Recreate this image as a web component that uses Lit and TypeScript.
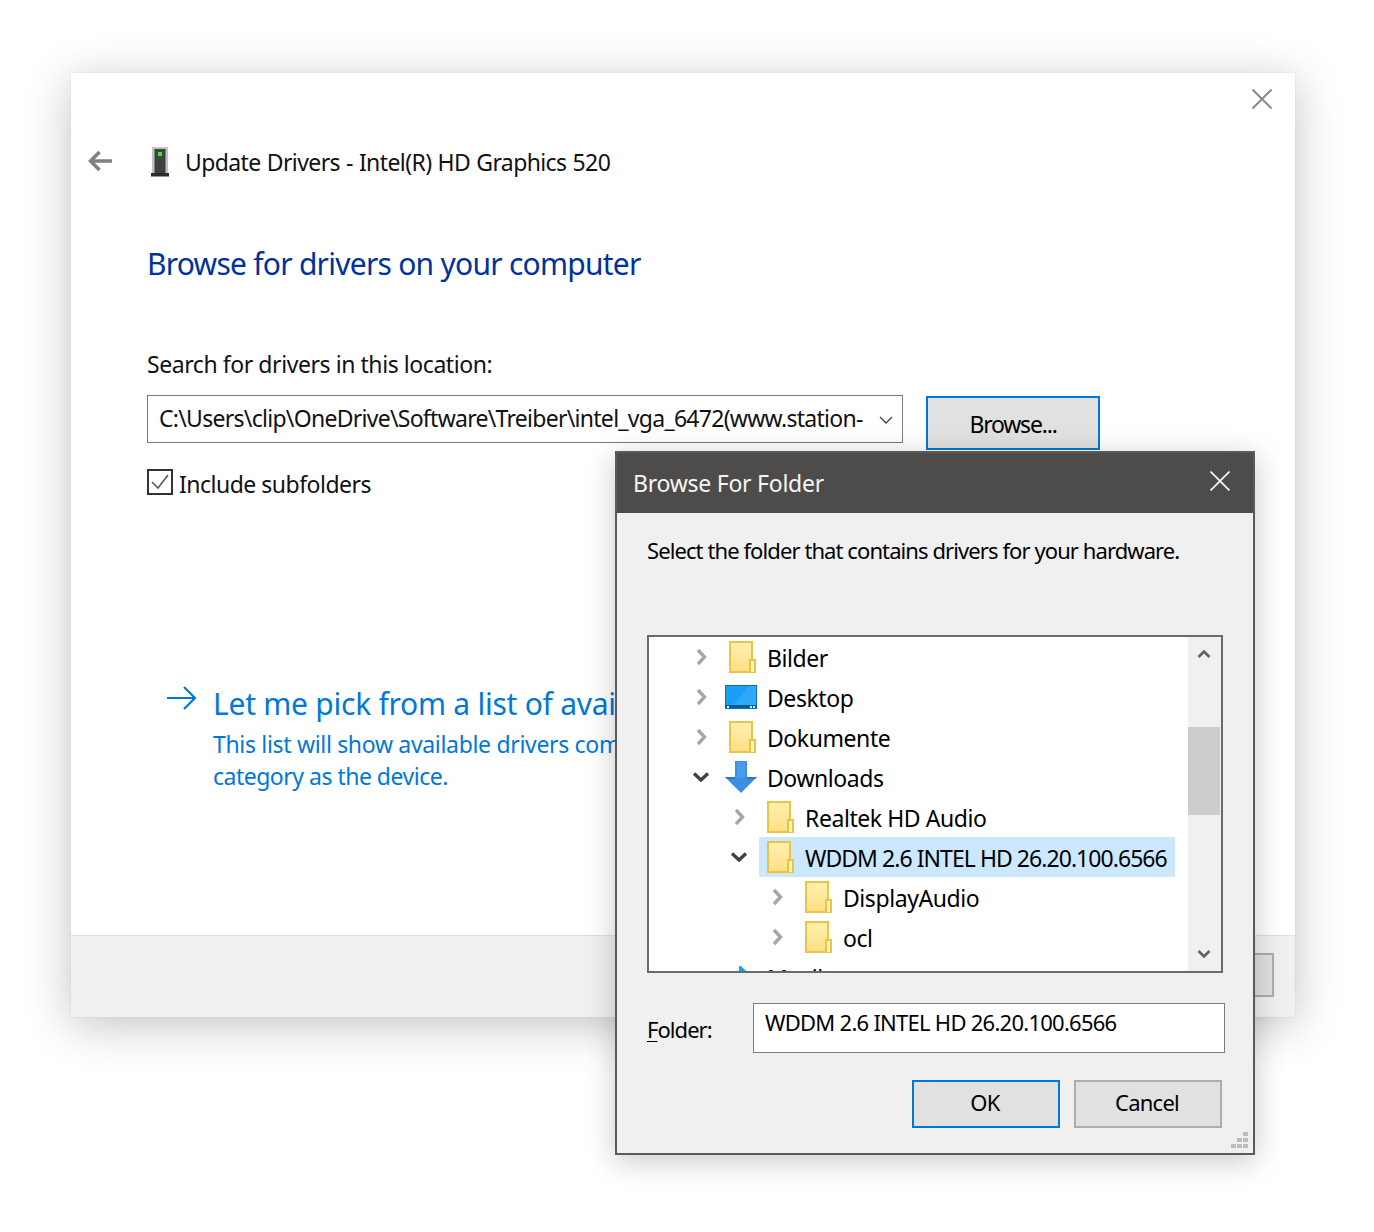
import { LitElement, html, css } from "lit";
import { customElement } from "lit/decorators.js";

type Kind = "folder" | "desktop" | "download" | "music";
interface Row { depth: number; open?: boolean; icon: Kind; label: string; selected?: boolean; noChev?: boolean }

const ROWS: Row[] = [
  { depth: 0, icon: "folder", label: "Bilder" },
  { depth: 0, icon: "desktop", label: "Desktop" },
  { depth: 0, icon: "folder", label: "Dokumente" },
  { depth: 0, open: true, icon: "download", label: "Downloads" },
  { depth: 1, icon: "folder", label: "Realtek HD Audio" },
  { depth: 1, open: true, icon: "folder", label: "WDDM 2.6 INTEL HD 26.20.100.6566", selected: true },
  { depth: 2, icon: "folder", label: "DisplayAudio" },
  { depth: 2, icon: "folder", label: "ocl" },
  { depth: 0, icon: "music", label: "Musik", noChev: true },
];

const icon = (k: Kind) => {
  if (k === "folder")
    return html`<svg width="32" height="32" viewBox="0 0 32 32">
      <defs><linearGradient id="fg" x1="0" y1="0" x2="0" y2="1"><stop offset="0" stop-color="#fff0b0"/><stop offset="1" stop-color="#fddf85"/></linearGradient></defs>
      <rect x="5" y="1" width="22" height="30" fill="url(#fg)" stroke="#ebc443" stroke-width="2"/>
      <rect x="25" y="19" width="5" height="13" fill="#fff3c4" stroke="#ebc443" stroke-width="2"/>
    </svg>`;
  if (k === "desktop")
    return html`<svg width="32" height="32" viewBox="0 0 32 32">
      <rect x="0" y="4" width="32" height="24" fill="#0b6fb4"/>
      <rect x="1" y="5" width="30" height="19" fill="#1a9df5"/>
      <path d="M8 24 L24 5 H31 V24Z" fill="#2fa9f7"/>
      <rect x="1" y="24" width="30" height="3" fill="#0a5a99"/>
      <rect x="2" y="25" width="2" height="2" fill="#dff"/><rect x="25" y="25" width="2" height="2" fill="#dff"/><rect x="28" y="25" width="2" height="2" fill="#dff"/>
    </svg>`;
  if (k === "download")
    return html`<svg width="32" height="32" viewBox="0 0 32 32">
      <path d="M10 0 H22 V16 H32 L16 32 L0 16 H10Z" fill="#3b8fe2"/>
      <path d="M12 1 H20 V17 H12Z" fill="#4a9ce8"/>
      <path d="M0 16 H10 V18 H2Z M32 16 H22 V18 H30Z" fill="#2b78c8"/>
    </svg>`;
  return html`<svg width="32" height="32" viewBox="0 0 32 32">
      <path d="M14 5 L16 5 L25 14 V32 H14Z" fill="#1a9df5"/>
    </svg>`;
};

const chev = (open?: boolean) =>
  open
    ? html`<svg width="18" height="12" viewBox="0 0 18 12"><path d="M2 2.5 L9 9 L16 2.5" fill="none" stroke="#404040" stroke-width="3.4"/></svg>`
    : html`<svg width="12" height="18" viewBox="0 0 12 18"><path d="M3 2 L9.5 9 L3 16" fill="none" stroke="#a6a6a6" stroke-width="3.4"/></svg>`;

@customElement("app-root")
export class AppRoot extends LitElement {
  static styles = css`
    :host { display: block; position: relative; width: 1374px; height: 1232px; background: #fff; overflow: hidden;
      font-family: "Noto Sans", "Open Sans", sans-serif; color: #000; font-size: 23px; letter-spacing: -0.55px; }
    * { box-sizing: border-box; }
    .canvas { padding: 73px 0 0 71px; }
    .window { width: 1224px; height: 944px; background: #fff; display: flex; flex-direction: column;
      box-shadow: 0 0 0 1px rgba(0,0,0,.025), 0 8px 44px rgba(0,0,0,.24); }
    .main { flex: 1; display: flex; flex-direction: column; min-height: 0; }
    .topbar { height: 52px; display: flex; justify-content: flex-end; padding: 16px 23px 0 0; }
    .head { display: flex; align-items: center; height: 36px; margin-top: 19px; padding-left: 17px; }
    .head .back { position: relative; top: -1px; }
    .head .device { margin-left: 37px; margin-right: 14px; display: flex; }
    .head .title { white-space: nowrap; color: #111; letter-spacing: -0.6px; word-spacing: 0.7px; }
    .h1 { margin: 0; padding: 62px 0 0 76px; font-weight: 400; font-size: 30px; line-height: 44px; color: #003399; letter-spacing: -0.75px; }
    .loc { padding: 60px 0 0 76px; line-height: 36px; color: #111; letter-spacing: -0.43px; }
    .locrow { display: flex; padding: 13px 0 0 76px; height: 77px; align-items: flex-start; }
    .combo { width: 756px; height: 48px; border: 1px solid #7a7a7a; display: flex; align-items: center; padding: 0 9px 0 11px; justify-content: space-between; white-space: nowrap; overflow: hidden; }
    .combo span { color: #111; overflow: hidden; width: 712px; letter-spacing: -0.72px; padding-bottom: 2px; }
    .combo svg { margin-top: 2px; }
    .browse { margin: 1px 0 0 23px; width: 174px; height: 54px; border: 2px solid #0078d7; background: #e1e1e1; display: flex; align-items: center; justify-content: center; letter-spacing: -1.2px; padding-top: 1px; }
    .check { display: flex; align-items: center; gap: 6px; padding: 6px 0 0 76px; color: #111; height: 44px; letter-spacing: -0.5px; }
    .box { width: 26px; height: 26px; border: 2px solid #333; display: flex; align-items: center; justify-content: center; margin-bottom: 4px; }
    .link { display: flex; padding: 181px 0 0 96px; color: #0078d7; white-space: nowrap; }
    .link .arrow { width: 46px; padding-top: 2px; display: flex; flex: none; }
    .link h2 { margin: 0; font-weight: 400; font-size: 30px; line-height: 40px; letter-spacing: -0.25px; }
    .link p { margin: 4px 0 0; line-height: 32px; }
    .link .wide { letter-spacing: -0.32px; }
    .link .narrow { letter-spacing: -0.5px; }
    .footer { height: 82px; background: #f0f0f0; border-top: 1px solid #dfdfdf; display: flex; justify-content: flex-end; padding: 17px 21px 0 0; }
    .fbtn { width: 148px; height: 44px; background: #e1e1e1; border: 2px solid #adadad; }

    .dialog { position: absolute; left: 615px; top: 451px; width: 640px; height: 704px; background: #f0f0f0;
      border: 2px solid #5a5a5a; box-shadow: 0 6px 28px rgba(0,0,0,.22); display: flex; flex-direction: column; }
    .dtitle { height: 60px; margin: 0; background: #4d4c4a; color: #f5f5f5; display: flex; align-items: center; justify-content: space-between; padding: 0 23px 0 16px; flex: none; letter-spacing: -0.25px; }
    .dtitle svg { margin-bottom: 4px; }
    .prompt { padding: 19px 0 0 30px; line-height: 36px; height: 122px; flex: none; font-size: 22px; letter-spacing: -0.91px; white-space: nowrap; }
    .treebox { margin-left: 30px; width: 576px; height: 338px; border: 2px solid #6b6b6b; background: #fff; display: flex; flex: none; overflow: hidden; }
    .tree { width: 539px; flex: none; overflow: hidden; }
    .row { height: 40px; display: flex; align-items: center; white-space: nowrap; letter-spacing: -0.43px; }
    .chev { width: 32px; flex: none; display: flex; justify-content: center; align-items: center; }
    .item { height: 40px; display: flex; align-items: center; gap: 10px; padding: 0 8px 0 4px; margin-left: 4px; flex: none; }
    .item span { padding-top: 2px; }
    .item.sel { background: #cce8ff; letter-spacing: -0.95px; }
    .item svg { display: block; flex: none; }
    .sb { width: 33px; flex: none; background: #f0f0f0; display: flex; flex-direction: column; padding-right: 1px; }
    .sbtn { height: 34px; display: flex; align-items: center; justify-content: center; flex: none; }
    .thumb { height: 88px; margin-top: 56px; background: #cdcdcd; flex: none; }
    .sbtn.down { margin-top: auto; }
    .folder { display: flex; padding: 30px 0 0 30px; align-items: flex-start; height: 80px; flex: none; }
    .folder label { width: 106px; padding-top: 8px; line-height: 36px; font-size: 22px; letter-spacing: -0.95px; }
    .folder label u { text-decoration-thickness: 1px; text-underline-offset: 3px; }
    .input { width: 472px; height: 50px; background: #fff; border: 1px solid #7a7a7a; padding: 0 11px; line-height: 36px; font-size: 22px; white-space: nowrap; letter-spacing: -0.74px; }
    .btns { display: flex; gap: 14px; padding: 27px 0 0 295px; flex: none; }
    .btn { width: 148px; height: 48px; background: #e1e1e1; border: 2px solid #adadad; display: flex; align-items: center; justify-content: center; font-size: 22px; padding: 0 2px 4px 0; letter-spacing: -0.75px; }
    .btn.def { border-color: #0078d7; }
    .grip { position: absolute; right: 4px; bottom: 3px; display: block; }
  `;

  render() {
    return html`
      <div class="canvas">
        <div class="window">
          <div class="main">
            <div class="topbar">
              <svg width="20" height="20" viewBox="0 0 20 20"><path d="M0.5 0.5 L19.5 19.5 M19.5 0.5 L0.5 19.5" stroke="#8a8a8a" stroke-width="2"/></svg>
            </div>
            <div class="head">
              <svg class="back" width="24" height="22" viewBox="0 0 24 22"><path d="M2 11 H24 M11.5 2 L2.5 11 L11.5 20" fill="none" stroke="#808080" stroke-width="3.6"/></svg>
              <span class="device">
                <svg width="22" height="32" viewBox="0 0 22 32">
                  <rect x="3" y="1" width="16" height="26" fill="#bcc4c8"/>
                  <rect x="5.5" y="3" width="11" height="24" fill="#414141"/>
                  <rect x="9" y="6" width="4" height="4" fill="#35f028"/>
                  <rect x="2" y="27" width="18" height="3.5" fill="#2b2b2b"/>
                </svg>
              </span>
              <span class="title">Update Drivers - Intel(R) HD Graphics 520</span>
            </div>
            <h1 class="h1">Browse for drivers on your computer</h1>
            <div class="loc">Search for drivers in this location:</div>
            <div class="locrow">
              <div class="combo">
                <span>C:\\Users\\clip\\OneDrive\\Software\\Treiber\\intel_vga_6472(www.station-</span>
                <svg width="14" height="8" viewBox="0 0 14 8"><path d="M1 1 L7 7 L13 1" fill="none" stroke="#444" stroke-width="1.3"/></svg>
              </div>
              <div class="browse">Browse...</div>
            </div>
            <div class="check">
              <span class="box"><svg width="20" height="18" viewBox="0 0 20 18"><path d="M2 9 L8 15 L18 2" fill="none" stroke="#555" stroke-width="1.5"/></svg></span>
              Include subfolders
            </div>
            <div class="link">
              <span class="arrow"><svg width="30" height="24" viewBox="0 0 30 24"><path d="M0 12 H28 M17 1 L28 12 L17 23" fill="none" stroke="#0078d7" stroke-width="2.2"/></svg></span>
              <div>
                <h2>Let me pick from a list of available drivers on my computer</h2>
                <p><span class="wide">This list will show available drivers compatible with the device, and all drivers in the same</span><br /><span class="narrow">category as the device.</span></p>
              </div>
            </div>
          </div>
          <div class="footer"><div class="fbtn"></div></div>
        </div>
      </div>

      <div class="dialog">
        <div class="dtitle">
          <span>Browse For Folder</span>
          <svg width="20" height="20" viewBox="0 0 20 20"><path d="M0.5 0.5 L19.5 19.5 M19.5 0.5 L0.5 19.5" stroke="#f5f5f5" stroke-width="1.8"/></svg>
        </div>
        <div class="prompt">Select the folder that contains drivers for your hardware.</div>
        <div class="treebox">
          <div class="tree">
            ${ROWS.map(
              (r) => html`<div class="row" style="padding-left:${36 + r.depth * 38}px">
                <span class="chev">${r.noChev ? "" : chev(r.open)}</span>
                <span class="item ${r.selected ? "sel" : ""}">${icon(r.icon)}<span>${r.label}</span></span>
              </div>`
            )}
          </div>
          <div class="sb">
            <div class="sbtn"><svg width="14" height="10" viewBox="0 0 14 10"><path d="M1.5 8 L7 2.5 L12.5 8" fill="none" stroke="#606060" stroke-width="2.6"/></svg></div>
            <div class="thumb"></div>
            <div class="sbtn down"><svg width="14" height="10" viewBox="0 0 14 10"><path d="M1.5 2 L7 7.5 L12.5 2" fill="none" stroke="#606060" stroke-width="2.6"/></svg></div>
          </div>
        </div>
        <div class="folder">
          <label><u>F</u>older:</label>
          <div class="input">WDDM 2.6 INTEL HD 26.20.100.6566</div>
        </div>
        <div class="btns">
          <div class="btn def">OK</div>
          <div class="btn">Cancel</div>
        </div>
        <svg class="grip" width="18" height="18" viewBox="0 0 18 18" fill="#bdbdbd">
          <rect x="12" y="0" width="5" height="4"/><rect x="6" y="6" width="5" height="4"/><rect x="12" y="6" width="5" height="4"/>
          <rect x="0" y="12" width="5" height="4"/><rect x="6" y="12" width="5" height="4"/><rect x="12" y="12" width="5" height="4"/>
        </svg>
      </div>
    `;
  }
}
